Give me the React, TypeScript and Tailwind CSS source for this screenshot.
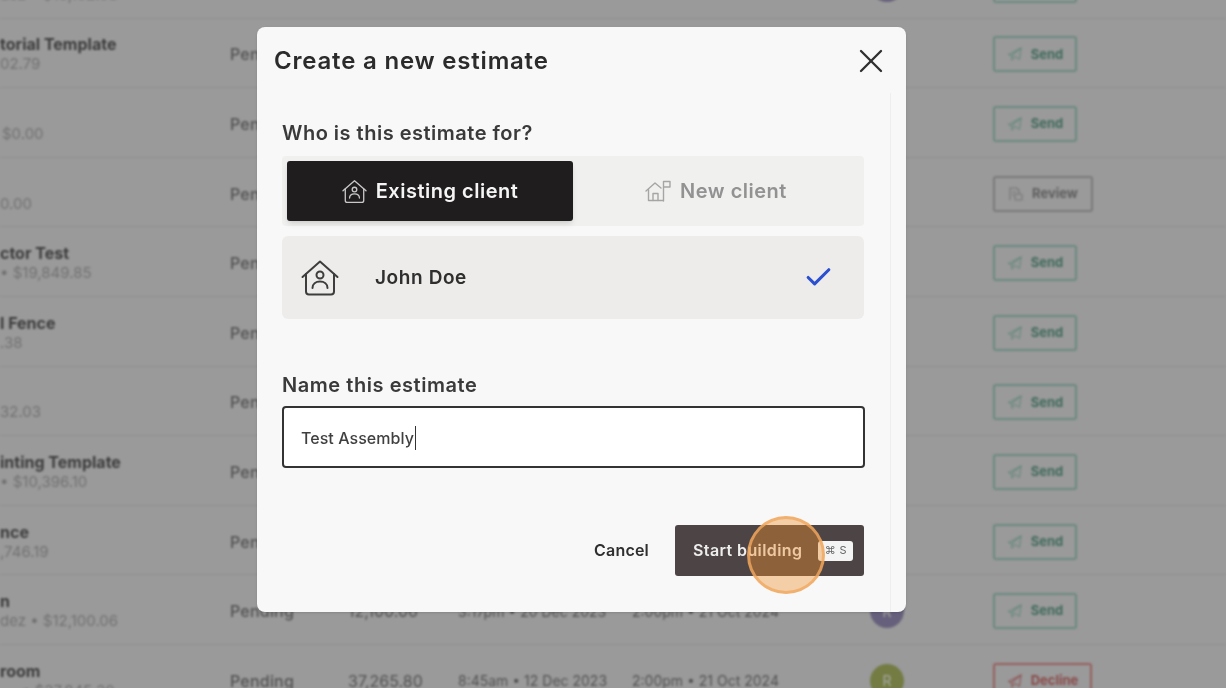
import { X, Check } from "lucide-react";

const rows = [
  { title: "", sub: "dez • $10,102.08", subCls: "pl-0", status: "Pending", amount: "10,102.08", sent: "9:12am • 20 Dec 2023", action: "send", avatar: "bg-[#67607c]", letter: "" },
  { title: "torial Template", sub: "02.79", subCls: "pl-0", status: "Pending", amount: "1,102.79", sent: "4:02pm • 20 Dec 2023", action: "send", avatar: "bg-[#67607c]", letter: "" },
  { title: "", sub: "$0.00", subCls: "pl-[2px]", status: "Pending", amount: "0.00", sent: "4:02pm • 20 Dec 2023", action: "send", avatar: "bg-[#67607c]", letter: "" },
  { title: "", sub: "0.00", subCls: "pl-0", status: "Pending", amount: "0.00", sent: "4:02pm • 20 Dec 2023", action: "review", avatar: "bg-[#67607c]", letter: "" },
  { title: "ctor Test", sub: "• $19,849.85", subCls: "pl-0", status: "Pending", amount: "19,849.85", sent: "4:02pm • 20 Dec 2023", action: "send", avatar: "bg-[#67607c]", letter: "" },
  { title: "l Fence", sub: ".38", subCls: "pl-0", status: "Pending", amount: "5,000.38", sent: "4:02pm • 20 Dec 2023", action: "send", avatar: "bg-[#67607c]", letter: "" },
  { title: "", sub: "32.03", subCls: "pl-0", status: "Pending", amount: "2,032.03", sent: "4:02pm • 20 Dec 2023", action: "send", avatar: "bg-[#67607c]", letter: "" },
  { title: "inting Template", sub: "• $10,396.10", subCls: "pl-0", status: "Pending", amount: "10,396.10", sent: "4:02pm • 20 Dec 2023", action: "send", avatar: "bg-[#67607c]", letter: "" },
  { title: "nce", sub: ",746.19", subCls: "pl-0", status: "Pending", amount: "4,746.19", sent: "4:02pm • 20 Dec 2023", action: "send", avatar: "bg-[#67607c]", letter: "" },
  { title: "n", sub: "dez • $12,100.06", subCls: "pl-0", status: "Pending", amount: "12,100.06", sent: "3:17pm • 20 Dec 2023", action: "send", avatar: "bg-[#67607c]", letter: "R" },
  { title: "room", sub: "• $37,845.20", subCls: "pl-[22px]", status: "Pending", amount: "37,265.80", sent: "8:45am • 12 Dec 2023", action: "decline", avatar: "bg-[#747c44]", letter: "R" },
];

function SendIcon({ className }: { className?: string }) {
  return (
    <svg viewBox="0 0 16 16" fill="none" stroke="currentColor" strokeWidth="1.2" strokeLinejoin="round" strokeLinecap="round" className={className}>
      <path d="M1.5 8.5 14 2l-1.5 11-5-2.5L5 14l-.5-4.3z" />
      <path d="M4.5 9.700 14 2" />
    </svg>
  );
}

function ReviewIcon({ className }: { className?: string }) {
  return (
    <svg viewBox="0 0 16 16" fill="none" stroke="currentColor" strokeWidth="1.2" strokeLinejoin="round" className={className}>
      <path d="M2 14V2h6.500L11 4.500V8" />
      <rect x="7" y="8" width="7" height="6" rx="1" />
      <path d="M4 6h4M4 9h2" />
    </svg>
  );
}

function ActionButton({ kind }: { kind: string }) {
  if (kind === "review") {
    return (
      <div className="flex h-9 w-[100px] items-center justify-center gap-2 rounded-[3px] border-2 border-[#7a7a7a] text-[13px] font-bold text-[#5e5e5e]">
        <ReviewIcon className="size-4 text-[#777777]" />
        Review
      </div>
    );
  }
  if (kind === "decline") {
    return (
      <div className="flex h-9 w-[99px] items-center justify-center gap-2 rounded-[3px] border-2 border-[#96605f] text-[13px] font-bold text-[#8a4a4a]">
        <SendIcon className="size-4 text-[#8e5a5a]" />
        Decline
      </div>
    );
  }
  return (
    <div className="flex h-9 w-[84px] items-center justify-center gap-2 rounded-[3px] border-2 border-[#6b8a80] text-[13px] font-bold text-[#406a5c]">
      <SendIcon className="size-4 text-[#6b8a80]" />
      Send
    </div>
  );
}

function HouseUserIcon({ className }: { className?: string }) {
  return (
    <svg viewBox="0 0 38 36" fill="none" stroke="currentColor" strokeWidth="2" strokeLinecap="round" strokeLinejoin="round" className={className}>
      <path d="M1.500 17 19 1.500 36.500 17" />
      <path d="M5 14v17.500a3 3 0 0 0 3 3h22a3 3 0 0 0 3-3V14" />
      <circle cx="19" cy="15" r="3.500" />
      <path d="M11.500 28c0-4 3.300-6.500 7.500-6.500s7.500 2.500 7.500 6.500" />
    </svg>
  );
}

function HouseFlagIcon({ className }: { className?: string }) {
  return (
    <svg viewBox="0 0 27 22" fill="none" stroke="currentColor" strokeWidth="1.400" strokeLinecap="round" strokeLinejoin="round" className={className}>
      <path d="M1 11 10 3l6 5" />
      <path d="M3.500 9.500V20.500h14.500" />
      <path d="M8 20.500v-7h5v7" />
      <path d="M18.500 21V1.500h6.500v5.500h-6.500" />
    </svg>
  );
}

export default function App() {
  return (
    <div className="relative h-[688px] w-full overflow-hidden bg-[#9a9a9a] font-['Inter',sans-serif]">
      {/* table behind the modal */}
      <div className="-mt-[51px] blur-[1.1px]">
        {rows.map((row, i) => (
          <div key={i} className="flex h-[69.6px] items-center border-b border-[#909090] pt-[3px] text-[16px] text-[#525252]">
            <div className="w-[230px] shrink-0 whitespace-nowrap leading-5">
              <div className="h-5 font-bold text-[#3c3c3c]">{row.title}</div>
              <div className={`h-5 text-[15px] text-[#727272] ${row.subCls}`}>{row.sub}</div>
            </div>
            <div className="w-[118px] shrink-0 font-medium tracking-[0.2px]">{row.status}</div>
            <div className="w-[110px] shrink-0">{row.amount}</div>
            <div className="w-[174px] shrink-0 whitespace-nowrap text-[14px]">{row.sent}</div>
            <div className="w-[238px] shrink-0 whitespace-nowrap text-[14px]">2:00pm • 21 Oct 2024</div>
            <div className="w-[123px] shrink-0">
              <div className={`flex size-[34px] items-center justify-center rounded-full text-[14px] text-[#a8a8a0] ${row.avatar}`}>{row.letter}</div>
            </div>
            <ActionButton kind={row.action} />
          </div>
        ))}
      </div>

      {/* modal */}
      <div className="absolute left-[257px] top-[27px] h-[585px] w-[649px] rounded-lg bg-[#f8f8f8] shadow-sm">
        <div className="flex h-[66px] items-center justify-between pl-[17px] pr-[15px] pt-[2px] blur-[0.3px]">
          <h2 className="text-[24px] font-semibold tracking-[0.8px] text-[#2b2b2b]">Create a new estimate</h2>
          <X className="size-[40px] text-[#2f2f2f]" strokeWidth={1.4} />
        </div>
        <div className="h-[519px] w-[634px] border-r border-[#eeeeee] pl-[25px] pr-[26px] pt-[26px]">
          <div className="blur-[0.3px]">
            <p className="text-[20px] font-semibold leading-7 tracking-[0.5px] text-[#3a3a3a]">Who is this estimate for?</p>
            <div className="mt-[9px] flex h-[70px] rounded-sm bg-[#f0f0ef] p-[5px]">
              <div className="flex w-[286px] items-center justify-center gap-[9px] rounded-[3px] bg-[#1f1d1e] text-[20px] font-semibold tracking-[0.5px] text-[#f5f5f5] shadow-md">
                <HouseUserIcon className="size-[25px] text-[#c9c9c9]" />
                Existing client
              </div>
              <div className="flex flex-1 items-center justify-center gap-[8px] text-[20px] font-semibold tracking-[0.5px] text-[#929292]">
                <HouseFlagIcon className="h-[22px] w-[27px] text-[#a5a5a5]" />
                New client
              </div>
            </div>
            <div className="mt-[10px] flex h-[83px] items-center rounded-md bg-[#edecea] pl-[19px] pr-[30px]">
              <HouseUserIcon className="h-[36px] w-[38px] text-[#3d3d3d]" />
              <span className="ml-[36px] flex-1 pt-[1px] text-[19px] font-semibold tracking-[0.6px] text-[#2f2f2f]">John Doe</span>
              <Check className="size-[31px] text-[#2a50d0]" strokeWidth={2.4} />
            </div>
            <p className="mt-[52px] text-[20px] font-semibold leading-7 tracking-[0.55px] text-[#3a3a3a]">Name this estimate</p>
            <div className="mt-[7px] flex h-[62px] w-[583px] items-center rounded-[4px] border-2 border-[#333333] bg-white pl-[17px] pt-[1px] text-[16px] font-medium tracking-[0.05px] text-[#3f3f3f]">
              Test Assembly
              <span className="ml-[1px] h-[24px] w-px bg-[#333333]" />
            </div>
            <div className="mt-[57px] flex items-center justify-end gap-[26px]">
              <span className="pb-[2px] text-[16px] font-semibold tracking-[0.2px] text-[#2f2f2f]">Cancel</span>
              <div className="flex h-[51px] w-[189px] items-center rounded-[3px] bg-[#4d4545] pl-[18px] text-[16px] font-semibold tracking-[0.4px] text-[#eeeeee]">
                <span className="whitespace-nowrap pb-[2px]">Start building</span>
                <span className="ml-[16px] flex h-5 w-[35px] items-center justify-center gap-1 rounded-[3px] bg-[#f4f4f4] text-[11px] font-normal text-[#666666]">⌘ S</span>
              </div>
            </div>
          </div>
        </div>
      </div>

      {/* click highlight */}
      <div className="absolute left-[747px] top-[516px] size-[78px] rounded-full border-[3px] border-[#f0a860]/80 bg-[#ee8f2c]/40 blur-[0.3px]" />
    </div>
  );
}
